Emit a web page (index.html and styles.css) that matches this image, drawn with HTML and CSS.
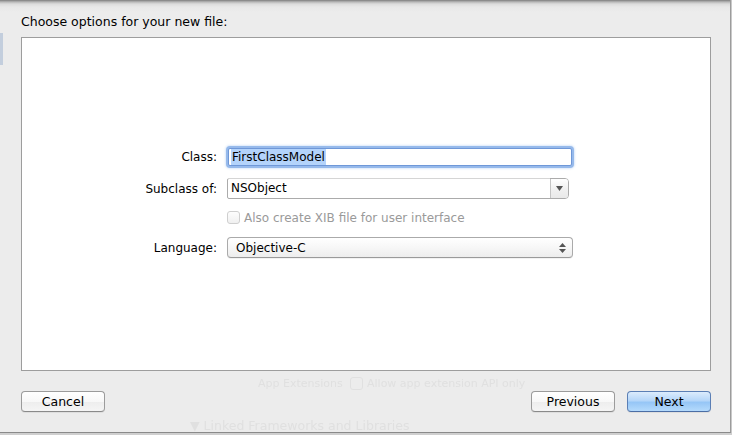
FILE: index.html
```html
<!DOCTYPE html>
<html>
<head>
<meta charset="utf-8">
<link rel="stylesheet" href="styles.css">
</head>
<body>
<div class="sheet">
  <div class="ghost">
    <span class="g g-side"></span>
    <span class="g g-ext">App Extensions</span>
    <span class="g g-box"></span>
    <span class="g g-allow">Allow app extension API only</span>
    <span class="g g-linked">▼ Linked Frameworks and Libraries</span>
  </div>
  <div class="title">Choose options for your new file:</div>
  <div class="panel">
    <div class="form">
      <div class="row r1">
        <label class="lbl">Class:</label>
        <div class="field"><span class="sel">FirstClassModel</span></div>
      </div>
      <div class="row r2">
        <label class="lbl">Subclass of:</label>
        <div class="combo">
          <div class="combo-text">NSObject</div>
          <div class="combo-btn">
            <svg width="7" height="5" viewBox="0 0 7 5"><path d="M0 0 H7 L3.5 5 Z" fill="#555"/></svg>
          </div>
        </div>
      </div>
      <div class="row r3">
        <span class="lbl"></span>
        <div class="check"><span class="box"></span><span class="check-text">Also create XIB file for user interface</span></div>
      </div>
      <div class="row r4">
        <label class="lbl">Language:</label>
        <div class="popup">
          <span class="popup-text">Objective-C</span>
          <svg class="arrows" width="7" height="10" viewBox="0 0 7 10"><path d="M0 4 L3.5 0 L7 4 Z M0 6 L3.5 10 L7 6 Z" fill="#555"/></svg>
        </div>
      </div>
    </div>
  </div>
  <div class="footer">
    <button class="btn">Cancel</button>
    <div class="right">
      <button class="btn">Previous</button>
      <button class="btn primary">Next</button>
    </div>
  </div>
</div>
<div class="under"></div>
</body>
</html>
```
FILE: styles.css
```css
html, body {
  margin: 0;
  padding: 0;
}
body {
  width: 732px;
  height: 435px;
  overflow: hidden;
  background: #c9c9c9;
  font-family: "DejaVu Sans", "Liberation Sans", sans-serif;
  font-size: 12px;
  color: #000;
}
.sheet {
  position: relative;
  width: 730px;
  height: 432px;
  border-right: 1px solid #9c9c9c;
  border-bottom: 1px solid #8a8a8a;
  background: linear-gradient(#7d7d7d 0, #b9b9b9 2px, #dcdcdc 4px, #e8e8e8 7px, #ececec 12px);
  box-sizing: content-box;
}
.ghost {
  position: absolute;
  inset: 0;
  pointer-events: none;
}
.g {
  position: absolute;
  color: #e0e0e0;
  filter: blur(0.7px);
  white-space: nowrap;
  font-size: 11.5px;
}
.g-side {
  left: 0;
  top: 33px;
  width: 3px;
  height: 32px;
  background: #c3cedd;
}
.g-ext { left: 258px; top: 377px; font-size: 11px; }
.g-box {
  left: 350px; top: 377px; width: 11px; height: 11px;
  border: 1px solid #e0e0e0; border-radius: 3px;
}
.g-allow { left: 367px; top: 377px; font-size: 11px; }
.g-linked { left: 190px; top: 418px; font-size: 12.5px; }
.title {
  position: relative;
  padding: 14px 0 0 21px;
  height: 23px;
  box-sizing: border-box;
  line-height: 15px;
  font-size: 12.5px;
}
.panel {
  position: relative;
  margin: 14px 19px 0 21px;
  height: 334px;
  box-sizing: border-box;
  border: 1px solid #9d9d9d;
  background: #fff;
}
.form {
  padding-top: 107px;
}
.row {
  display: flex;
  align-items: center;
}
.lbl {
  width: 203px;
  text-align: right;
  padding-right: 8px;
  box-sizing: border-box;
  flex: none;
}
.r1 { height: 23px; }
.r2 { height: 21px; margin-top: 10px; }
.r3 { height: 15px; margin-top: 11px; }
.r4 { height: 21px; margin-top: 12px; }
.field {
  margin-left: 3px;
  width: 344px;
  height: 18px;
  box-sizing: border-box;
  border: 1px solid #6f98d8;
  border-radius: 2px;
  box-shadow: 0 0 0 2px rgba(127, 170, 230, 0.75), 0 0 2px 3px rgba(150, 190, 240, 0.35);
  background: #fff;
  display: flex;
  align-items: center;
  padding-left: 2px;
}
.sel {
  background: #b3d3fb;
  line-height: 16px;
  padding: 0 1px;
}
.combo {
  margin-left: 2px;
  width: 342px;
  height: 21px;
  box-sizing: border-box;
  border: 1px solid #ababab;
  border-radius: 2px 4px 4px 2px;
  display: flex;
  background: #fff;
}
.combo-text {
  flex: 1;
  padding-left: 3px;
  line-height: 19px;
  border-top: 1px solid #d5d5d5;
  margin-top: -1px;
}
.combo-btn {
  width: 17px;
  border-left: 1px solid #c4c4c4;
  border-radius: 0 3px 3px 0;
  background: linear-gradient(#ffffff, #f1f1f1 50%, #e9e9e9);
  display: flex;
  align-items: center;
  justify-content: center;
}
.check {
  margin-left: 2px;
  display: flex;
  align-items: center;
}
.box {
  width: 13px;
  height: 13px;
  box-sizing: border-box;
  border: 1px solid #cfcfcf;
  border-radius: 3px;
  background: linear-gradient(#fdfdfd, #f0f0f0);
}
.check-text {
  margin-left: 4px;
  color: #9a9a9a;
}
.popup {
  margin-left: 2px;
  width: 346px;
  height: 21px;
  box-sizing: border-box;
  border: 1px solid #aaaaaa;
  border-bottom-color: #9a9a9a;
  border-radius: 4px;
  background: linear-gradient(#ffffff, #f7f7f7 50%, #ededed);
  box-shadow: 0 1px 0 rgba(0,0,0,0.05);
  display: flex;
  align-items: center;
  justify-content: space-between;
  padding: 0 6px 0 8px;
}
.footer {
  display: flex;
  justify-content: space-between;
  padding: 0 19px 0 21px;
  margin-top: 20px;
}
.right {
  display: flex;
  gap: 12px;
}
.btn {
  width: 84px;
  height: 21px;
  box-sizing: border-box;
  border: 1px solid #9b9b9b;
  border-bottom-color: #8a8a8a;
  border-radius: 4px;
  background: linear-gradient(#ffffff, #f8f8f8 50%, #ededed 51%, #f5f5f5);
  font-family: "DejaVu Sans", "Liberation Sans", sans-serif;
  font-size: 12.5px;
  color: #000;
  padding: 0;
  line-height: 18px;
  box-shadow: 0 1px 0 rgba(0,0,0,0.06);
}
.btn.primary {
  border-color: #5b7fb5;
  border-bottom-color: #4b6ea5;
  background: linear-gradient(#dcecfd, #b5d6f9 45%, #96c6f6 55%, #b4dafc);
}
.under {
  height: 2px;
  background: #cfcfcf;
}
```
